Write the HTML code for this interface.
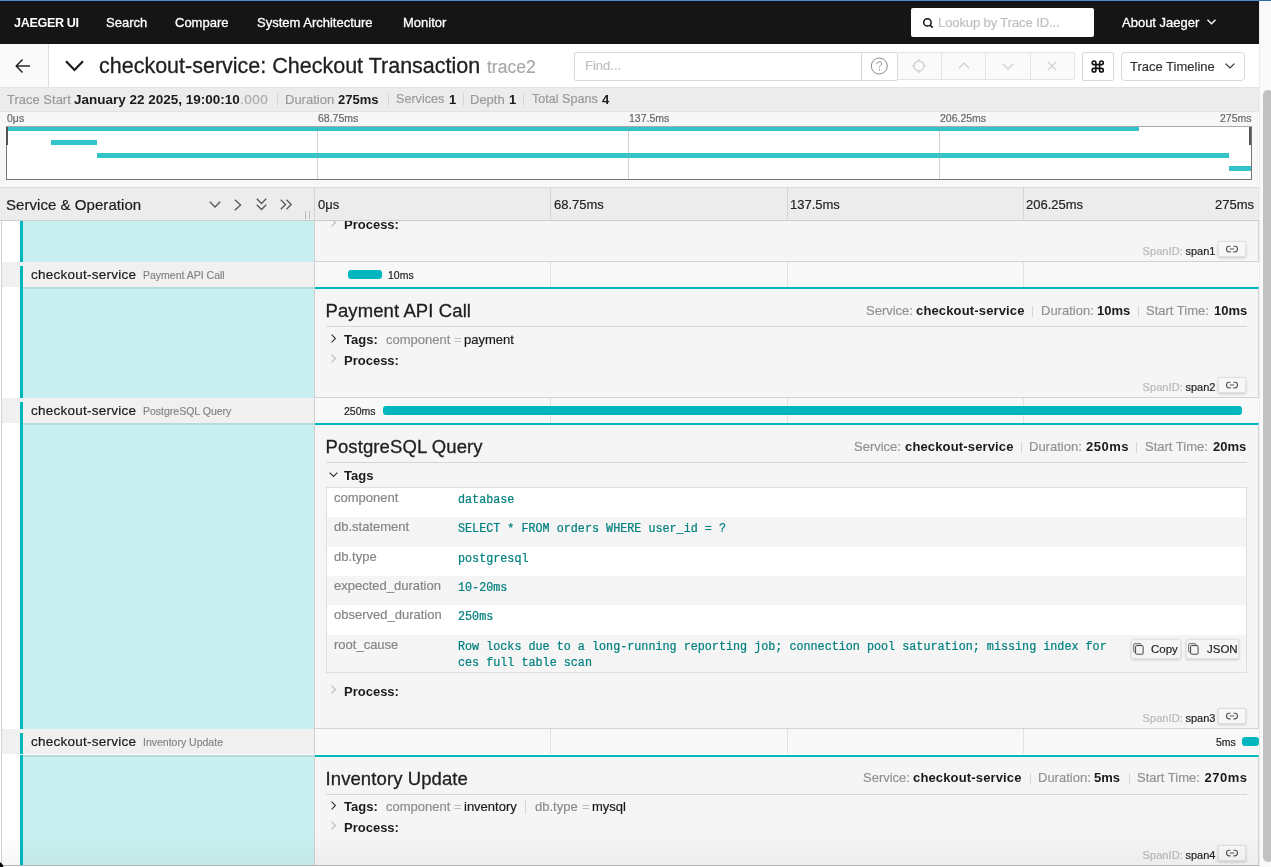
<!DOCTYPE html><html><head><meta charset="utf-8"><title>Jaeger UI</title><style>
*{box-sizing:border-box;margin:0;padding:0}
html,body{width:1271px;height:867px;overflow:hidden;background:#fff;font-family:"Liberation Sans",sans-serif;color:#222}
#root{position:absolute;left:0;top:0;width:1271px;height:867px;overflow:hidden;will-change:transform}
.a{position:absolute}
.t{position:absolute;white-space:pre;line-height:1}
svg{position:absolute;overflow:visible}
.vsep{position:absolute;width:1px;background:#d6d6d6}
.mono{font-family:"Liberation Mono",monospace;color:#00807f;-webkit-text-stroke:0.22px #00807f;transform:scaleY(1.1);transform-origin:0 11.1px}
</style></head><body><div id="root">
<div class="a" style="left:0;top:0;width:1259px;height:1px;background:#4a8dcc"></div><div class="a" style="left:1259px;top:0;width:12px;height:1px;background:#2e6aa6"></div>
<div class="a" style="left:0;top:1px;width:1259px;height:43px;background:#151515"></div>
<span class="t" style="left:14px;top:16.5px;font-size:12.6px;color:#fff;font-weight:700;letter-spacing:-0.35px">JAEGER UI</span>
<span class="t" style="left:106px;top:16px;font-size:13px;color:#fff;-webkit-text-stroke:0.3px #fff">Search</span>
<span class="t" style="left:175px;top:16px;font-size:13px;color:#fff;-webkit-text-stroke:0.3px #fff">Compare</span>
<span class="t" style="left:257px;top:16px;font-size:13px;color:#fff;-webkit-text-stroke:0.3px #fff">System Architecture</span>
<span class="t" style="left:403px;top:16px;font-size:13px;color:#fff;-webkit-text-stroke:0.3px #fff">Monitor</span>
<span class="t" style="left:1122px;top:16px;font-size:13px;color:#fff;-webkit-text-stroke:0.3px #fff">About Jaeger</span>
<div class="a" style="left:911px;top:8px;width:183px;height:29px;background:#fff;border-radius:2px"></div>
<svg style="left:923px;top:18px" width="11" height="11" viewBox="0 0 11 11"><circle cx="4.4" cy="4.4" r="3.7" fill="none" stroke="#151515" stroke-width="1.5"/><line x1="7.1" y1="7.1" x2="9.8" y2="9.8" stroke="#151515" stroke-width="1.6"/></svg>
<span class="t" style="left:938px;top:16px;font-size:13px;color:#bfbfbf;letter-spacing:-0.1px;-webkit-text-stroke:0.18px currentColor">Lookup by Trace ID...</span>
<svg style="left:1207px;top:19px" width="9" height="6" viewBox="0 0 9 6"><polyline points="0.5,0.8 4.5,4.8 8.5,0.8" fill="none" stroke="#fff" stroke-width="1.3"/></svg>
<div class="a" style="left:1259px;top:1px;width:12px;height:866px;background:#f9f9f9;border-left:1px solid #ebebeb"></div>
<div class="a" style="left:1263px;top:90px;width:10px;height:772px;background:#c1c1c1;border-radius:5px"></div>
<div class="a" style="left:0;top:44px;width:1259px;height:44px;background:#fff;border-bottom:1px solid #e3e3e3"></div>
<div class="a" style="left:0;top:44px;width:49px;height:43px;background:#fafafa;border-right:1px solid #dedede"></div>
<svg style="left:15px;top:59px" width="16" height="14" viewBox="0 0 16 14"><polyline points="7.5,0.6 1.2,7 7.5,13.4" fill="none" stroke="#1a1a1a" stroke-width="1.4"/><line x1="1.2" y1="7" x2="15" y2="7" stroke="#1a1a1a" stroke-width="1.4"/></svg>
<svg style="left:65px;top:60px" width="19" height="12" viewBox="0 0 19 12"><polyline points="1,1.2 9.5,10 18,1.2" fill="none" stroke="#1a1a1a" stroke-width="2.2"/></svg>
<span class="t" style="left:99px;top:56px;font-size:21.5px;color:#1f1f1f;-webkit-text-stroke:0.3px #1f1f1f">checkout-service: Checkout Transaction</span>
<span class="t" style="left:487px;top:59px;font-size:17.5px;color:#a8a8a8;-webkit-text-stroke:0.18px currentColor">trace2</span>
<div class="a" style="left:574px;top:52px;width:324px;height:29px;background:#fff;border:1px solid #d9d9d9;border-radius:2px"></div>
<div class="a" style="left:861px;top:52px;width:1px;height:29px;background:#d9d9d9"></div>
<span class="t" style="left:585px;top:59px;font-size:13px;color:#bfbfbf;-webkit-text-stroke:0.18px currentColor">Find...</span>
<svg style="left:870px;top:57px" width="18" height="18" viewBox="0 0 18 18"><circle cx="9.3" cy="9" r="8" fill="none" stroke="#8a8a8a" stroke-width="1"/><path d="M6.9,7.1 C6.9,5.5 8,4.8 9.3,4.8 C10.7,4.8 11.7,5.7 11.7,6.9 C11.7,8.5 9.4,8.6 9.4,10.5" fill="none" stroke="#888" stroke-width="1"/><circle cx="9.4" cy="12.8" r="0.7" fill="#888"/></svg>
<div class="a" style="left:898px;top:52px;width:177px;height:28px;background:#fafafa;border:1px solid #e4e4e4;border-left:none;border-radius:0 2px 2px 0"></div>
<div class="a" style="left:941px;top:52px;width:1px;height:28px;background:#e4e4e4"></div>
<div class="a" style="left:985px;top:52px;width:1px;height:28px;background:#e4e4e4"></div>
<div class="a" style="left:1030px;top:52px;width:1px;height:28px;background:#e4e4e4"></div>
<svg style="left:911px;top:58px" width="16" height="16" viewBox="0 0 16 16"><circle cx="8" cy="8" r="5" fill="none" stroke="#d2d2d2" stroke-width="1.3"/><line x1="8" y1="1" x2="8" y2="3.2" stroke="#d2d2d2" stroke-width="1.3"/><line x1="8" y1="12.8" x2="8" y2="15" stroke="#d2d2d2" stroke-width="1.3"/><line x1="1" y1="8" x2="3.2" y2="8" stroke="#d2d2d2" stroke-width="1.3"/><line x1="12.8" y1="8" x2="15" y2="8" stroke="#d2d2d2" stroke-width="1.3"/></svg>
<svg style="left:958px;top:62px" width="12" height="7" viewBox="0 0 12 7"><polyline points="0.8,6.2 6,1 11.2,6.2" fill="none" stroke="#d2d2d2" stroke-width="1.3"/></svg>
<svg style="left:1002px;top:63px" width="12" height="7" viewBox="0 0 12 7"><polyline points="0.8,0.8 6,6 11.2,0.8" fill="none" stroke="#d2d2d2" stroke-width="1.3"/></svg>
<svg style="left:1047px;top:61px" width="10" height="10" viewBox="0 0 10 10"><line x1="1" y1="1" x2="9" y2="9" stroke="#d2d2d2" stroke-width="1.3"/><line x1="9" y1="1" x2="1" y2="9" stroke="#d2d2d2" stroke-width="1.3"/></svg>
<div class="a" style="left:1082px;top:52px;width:32px;height:29px;background:#fff;border:1px solid #d9d9d9;border-radius:2px"></div>
<svg style="left:1091px;top:60px" width="13.5" height="13" viewBox="-1 -1 14 14"><path d="M4,4 H2 A2,2 0 1 1 4,2 V10 A2,2 0 1 1 2,8 H10 A2,2 0 1 1 8,10 V2 A2,2 0 1 1 10,4 H4" fill="none" stroke="#111" stroke-width="1.7"/></svg>
<div class="a" style="left:1121px;top:52px;width:124px;height:29px;background:#fff;border:1px solid #d9d9d9;border-radius:4px"></div>
<span class="t" style="left:1130px;top:60px;font-size:13px;color:#333;-webkit-text-stroke:0.18px currentColor">Trace Timeline</span>
<svg style="left:1225px;top:63px" width="10" height="6" viewBox="0 0 10 6"><polyline points="0.6,0.6 5,5 9.4,0.6" fill="none" stroke="#333" stroke-width="1.2"/></svg>
<div class="a" style="left:0;top:88px;width:1259px;height:23px;background:#ececec"></div>
<span class="t" style="left:7px;top:93px;font-size:13px;color:#9a9a9a;-webkit-text-stroke:0.18px currentColor">Trace Start</span>
<span class="t" style="left:74px;top:93px;font-size:13.5px;color:#1a1a1a;font-weight:700">January 22 2025, 19:00:10</span>
<span class="t" style="left:240px;top:93px;font-size:13.5px;color:#aaa;letter-spacing:0.5px;-webkit-text-stroke:0.18px currentColor">.000</span>
<div class="vsep" style="left:277px;top:93px;height:13px"></div>
<div class="vsep" style="left:388px;top:93px;height:13px"></div>
<div class="vsep" style="left:463px;top:93px;height:13px"></div>
<div class="vsep" style="left:523px;top:93px;height:13px"></div>
<span class="t" style="left:285px;top:93px;font-size:13px;color:#9a9a9a;-webkit-text-stroke:0.18px currentColor">Duration</span>
<span class="t" style="left:338px;top:93px;font-size:13px;color:#1a1a1a;font-weight:700">275ms</span>
<span class="t" style="left:396px;top:93.4px;font-size:12.6px;color:#9a9a9a;-webkit-text-stroke:0.18px currentColor">Services</span>
<span class="t" style="left:449px;top:93px;font-size:13px;color:#1a1a1a;font-weight:700">1</span>
<span class="t" style="left:470px;top:93px;font-size:13px;color:#9a9a9a;-webkit-text-stroke:0.18px currentColor">Depth</span>
<span class="t" style="left:509px;top:93px;font-size:13px;color:#1a1a1a;font-weight:700">1</span>
<span class="t" style="left:532px;top:93.4px;font-size:12.6px;color:#9a9a9a;-webkit-text-stroke:0.18px currentColor">Total Spans</span>
<span class="t" style="left:602px;top:93px;font-size:13px;color:#1a1a1a;font-weight:700">4</span>
<div class="a" style="left:0;top:111px;width:1259px;height:76px;background:#f7f7f7;border-top:1px solid #e2e2e2"></div>
<span class="t" style="left:7px;top:113px;font-size:10.5px;color:#666;-webkit-text-stroke:0.18px currentColor">0μs</span>
<span class="t" style="left:318px;top:113px;font-size:10.5px;color:#666;-webkit-text-stroke:0.18px currentColor">68.75ms</span>
<span class="t" style="left:629px;top:113px;font-size:10.5px;color:#666;-webkit-text-stroke:0.18px currentColor">137.5ms</span>
<span class="t" style="left:940px;top:113px;font-size:10.5px;color:#666;-webkit-text-stroke:0.18px currentColor">206.25ms</span>
<span class="t" style="left:1220px;top:113px;font-size:10.5px;color:#666;-webkit-text-stroke:0.18px currentColor">275ms</span>
<div class="a" style="left:6px;top:126px;width:1246px;height:54px;background:#fff;border:1px solid #777;border-top:1px solid #a9a9a9"></div>
<div class="a" style="left:7px;top:127px;width:1132px;height:4px;background:#33c4c9"></div>
<div class="a" style="left:51px;top:140px;width:46px;height:5px;background:#33c4c9"></div>
<div class="a" style="left:97px;top:153px;width:1132px;height:5px;background:#33c4c9"></div>
<div class="a" style="left:1229px;top:166px;width:22px;height:5px;background:#33c4c9"></div>
<div class="a" style="left:317px;top:127px;width:1px;height:52px;background:rgba(150,150,150,0.45)"></div>
<div class="a" style="left:628px;top:127px;width:1px;height:52px;background:rgba(150,150,150,0.45)"></div>
<div class="a" style="left:939px;top:127px;width:1px;height:52px;background:rgba(150,150,150,0.45)"></div>
<div class="a" style="left:6px;top:127px;width:2px;height:18px;background:#555"></div>
<div class="a" style="left:1249px;top:127px;width:2px;height:18px;background:#555"></div>
<div class="a" style="left:0;top:187px;width:1259px;height:34px;background:#ececec;border-top:1px solid #dcdcdc;border-bottom:1px solid #cdcdcd"></div>
<span class="t" style="left:6px;top:197px;font-size:15px;color:#1a1a1a;letter-spacing:0.05px;-webkit-text-stroke:0.18px currentColor">Service &amp; Operation</span>
<svg style="left:209px;top:201px" width="12" height="7" viewBox="0 0 12 7"><polyline points="0.8,0.8 6,6 11.2,0.8" fill="none" stroke="#555" stroke-width="1.3"/></svg>
<svg style="left:234px;top:199px" width="8" height="12" viewBox="0 0 8 12"><polyline points="0.8,0.8 6.6,6 0.8,11.2" fill="none" stroke="#555" stroke-width="1.3"/></svg>
<svg style="left:256px;top:198px" width="11" height="13" viewBox="0 0 11 13"><polyline points="0.8,0.8 5.5,5.5 10.2,0.8" fill="none" stroke="#555" stroke-width="1.3"/><polyline points="0.8,6.8 5.5,11.5 10.2,6.8" fill="none" stroke="#555" stroke-width="1.3"/></svg>
<svg style="left:280px;top:199px" width="12" height="11" viewBox="0 0 12 11"><polyline points="0.8,0.8 5.5,5.5 0.8,10.2" fill="none" stroke="#555" stroke-width="1.3"/><polyline points="6.5,0.8 11.2,5.5 6.5,10.2" fill="none" stroke="#555" stroke-width="1.3"/></svg>
<div class="a" style="left:305px;top:211px;width:1px;height:8px;background:#bbb"></div><div class="a" style="left:309px;top:211px;width:1px;height:8px;background:#bbb"></div>
<div class="a" style="left:314px;top:188px;width:1px;height:33px;background:#d4d4d4"></div>
<div class="a" style="left:550px;top:188px;width:1px;height:33px;background:#d4d4d4"></div>
<div class="a" style="left:787px;top:188px;width:1px;height:33px;background:#d4d4d4"></div>
<div class="a" style="left:1023px;top:188px;width:1px;height:33px;background:#d4d4d4"></div>
<span class="t" style="left:318px;top:198px;font-size:13px;color:#222;-webkit-text-stroke:0.18px currentColor">0μs</span>
<span class="t" style="left:554px;top:198px;font-size:13px;color:#222;-webkit-text-stroke:0.18px currentColor">68.75ms</span>
<span class="t" style="left:790px;top:198px;font-size:13px;color:#222;-webkit-text-stroke:0.18px currentColor">137.5ms</span>
<span class="t" style="left:1026px;top:198px;font-size:13px;color:#222;-webkit-text-stroke:0.18px currentColor">206.25ms</span>
<span class="t" style="left:1215px;top:198px;font-size:13px;color:#222;-webkit-text-stroke:0.18px currentColor">275ms</span>
<div class="a" style="left:0;top:221px;width:1259px;height:645px;overflow:hidden">
<div class="a" style="left:0;top:-221px;width:1259px;height:867px">
<div class="a" style="left:314px;top:100px;width:945px;height:162px;background:#f5f5f5;border:1px solid #d3d3d3;border-top:none"></div>
<div class="a" style="left:2px;top:100px;width:18px;height:162px;background:#fff"></div>
<div class="a" style="left:20px;top:100px;width:3px;height:162px;background:#00b7bd"></div>
<div class="a" style="left:23px;top:100px;width:291px;height:162px;background:#c9eff0"></div>
<svg style="left:330.8px;top:217.7px" width="5" height="9" viewBox="0 0 5 9"><polyline points="0.6,0.6 4.4,4.5 0.6,8.4" fill="none" stroke="#bbb" stroke-width="1.15"/></svg>
<span class="t" style="left:344px;top:218px;font-size:13px;color:#1a1a1a;font-weight:700">Process:</span>
<div class="a" style="left:1218px;top:241px;width:28px;height:16px;background:#f7f7f7;border:1px solid #e0e0e0;border-radius:1px;box-shadow:0 1px 3px rgba(0,0,0,0.18)"></div>
<svg style="left:1226px;top:245px" width="12" height="8" viewBox="0 0 12 8"><path d="M4.6,1.2 H3.3 A2.6,2.6 0 0 0 3.3,6.8 H4.6 M7.4,1.2 H8.7 A2.6,2.6 0 0 1 8.7,6.8 H7.4 M3.8,4 H8.2" fill="none" stroke="#555" stroke-width="1.15"/></svg>
<span class="t" style="left:1142.5px;top:246px;font-size:11px;color:#b8b8b8;letter-spacing:0.1px;-webkit-text-stroke:0.18px currentColor">SpanID:</span>
<span class="t" style="left:1185.5px;top:246px;font-size:11px;color:#222;-webkit-text-stroke:0.18px currentColor">span1</span>
<div class="a" style="left:2px;top:262px;width:312px;height:25px;background:#f0f0f0"></div>
<div class="a" style="left:20px;top:266px;width:3px;height:21px;background:#00b7bd"></div>
<div class="a" style="left:314px;top:262px;width:945px;height:25px;background:#f8f8f8"></div>
<div class="a" style="left:550px;top:262px;width:1px;height:25px;background:#e2e2e2"></div>
<div class="a" style="left:787px;top:262px;width:1px;height:25px;background:#e2e2e2"></div>
<div class="a" style="left:1023px;top:262px;width:1px;height:25px;background:#e2e2e2"></div>
<span class="t" style="left:31px;top:267.5px;font-size:13.5px;color:#1a1a1a;letter-spacing:0.25px;-webkit-text-stroke:0.2px #1a1a1a">checkout-service</span>
<span class="t" style="left:143px;top:270.3px;font-size:10.5px;color:#858585;-webkit-text-stroke:0.18px currentColor">Payment API Call</span>
<div class="a" style="left:348px;top:270px;width:34px;height:9px;background:#00b7bd;border-radius:3px"></div>
<span class="t" style="left:388px;top:270px;font-size:10.5px;color:#222;-webkit-text-stroke:0.18px currentColor">10ms</span>
<div class="a" style="left:314px;top:287px;width:945px;height:111px;background:#f5f5f5;border:1px solid #d3d3d3;border-top:2px solid #00b7bd"></div>
<div class="a" style="left:2px;top:287px;width:18px;height:111px;background:#fff"></div>
<div class="a" style="left:20px;top:287px;width:3px;height:111px;background:#00b7bd"></div>
<div class="a" style="left:23px;top:287px;width:291px;height:111px;background:#c9eff0"></div>
<div class="a" style="left:23px;top:287px;width:291px;height:2px;background:#b3dcdd"></div>
<span class="t" style="left:325.5px;top:301.5px;font-size:18.5px;color:#1f1f1f;letter-spacing:0.1px;-webkit-text-stroke:0.3px #1f1f1f">Payment API Call</span>
<div class="a" style="left:326px;top:326px;width:921px;height:1px;background:#d6d6d6"></div>
<span class="t" style="left:866px;top:304px;font-size:13px;color:#929292;-webkit-text-stroke:0.18px currentColor">Service:</span>
<span class="t" style="left:916px;top:304px;font-size:13px;color:#1a1a1a;font-weight:700;letter-spacing:0.15px">checkout-service</span>
<span class="t" style="left:1041px;top:304px;font-size:13px;color:#929292;-webkit-text-stroke:0.18px currentColor">Duration:</span>
<span class="t" style="left:1097px;top:304px;font-size:13px;color:#1a1a1a;font-weight:700">10ms</span>
<span class="t" style="left:1146px;top:304px;font-size:13px;color:#929292;-webkit-text-stroke:0.18px currentColor">Start Time:</span>
<span class="t" style="left:1214px;top:304px;font-size:13px;color:#1a1a1a;font-weight:700">10ms</span>
<div class="vsep" style="left:1032px;top:306px;height:11px"></div>
<div class="vsep" style="left:1138px;top:306px;height:11px"></div>
<svg style="left:330.8px;top:333.7px" width="5" height="9" viewBox="0 0 5 9"><polyline points="0.6,0.6 4.4,4.5 0.6,8.4" fill="none" stroke="#333" stroke-width="1.15"/></svg>
<span class="t" style="left:344px;top:333px;font-size:13px;color:#1a1a1a;font-weight:700">Tags:</span>
<span class="t" style="left:386px;top:333px;font-size:13px;color:#8c8c8c;-webkit-text-stroke:0.18px currentColor">component</span>
<span class="t" style="left:454px;top:333px;font-size:13px;color:#bbb;-webkit-text-stroke:0.18px currentColor">=</span>
<span class="t" style="left:464px;top:333px;font-size:13px;color:#1a1a1a;-webkit-text-stroke:0.18px currentColor">payment</span>
<svg style="left:330.8px;top:353.7px" width="5" height="9" viewBox="0 0 5 9"><polyline points="0.6,0.6 4.4,4.5 0.6,8.4" fill="none" stroke="#bbb" stroke-width="1.15"/></svg>
<span class="t" style="left:344px;top:354px;font-size:13px;color:#1a1a1a;font-weight:700">Process:</span>
<div class="a" style="left:1218px;top:377px;width:28px;height:16px;background:#f7f7f7;border:1px solid #e0e0e0;border-radius:1px;box-shadow:0 1px 3px rgba(0,0,0,0.18)"></div>
<svg style="left:1226px;top:381px" width="12" height="8" viewBox="0 0 12 8"><path d="M4.6,1.2 H3.3 A2.6,2.6 0 0 0 3.3,6.8 H4.6 M7.4,1.2 H8.7 A2.6,2.6 0 0 1 8.7,6.8 H7.4 M3.8,4 H8.2" fill="none" stroke="#555" stroke-width="1.15"/></svg>
<span class="t" style="left:1142.5px;top:382px;font-size:11px;color:#b8b8b8;letter-spacing:0.1px;-webkit-text-stroke:0.18px currentColor">SpanID:</span>
<span class="t" style="left:1185.5px;top:382px;font-size:11px;color:#222;-webkit-text-stroke:0.18px currentColor">span2</span>
<div class="a" style="left:2px;top:398px;width:312px;height:25px;background:#f0f0f0"></div>
<div class="a" style="left:20px;top:402px;width:3px;height:21px;background:#00b7bd"></div>
<div class="a" style="left:314px;top:398px;width:945px;height:25px;background:#f8f8f8"></div>
<div class="a" style="left:550px;top:398px;width:1px;height:25px;background:#e2e2e2"></div>
<div class="a" style="left:787px;top:398px;width:1px;height:25px;background:#e2e2e2"></div>
<div class="a" style="left:1023px;top:398px;width:1px;height:25px;background:#e2e2e2"></div>
<span class="t" style="left:31px;top:403.5px;font-size:13.5px;color:#1a1a1a;letter-spacing:0.25px;-webkit-text-stroke:0.2px #1a1a1a">checkout-service</span>
<span class="t" style="left:143px;top:406.3px;font-size:10.5px;color:#858585;-webkit-text-stroke:0.18px currentColor">PostgreSQL Query</span>
<div class="a" style="left:383px;top:406px;width:859px;height:9px;background:#00b7bd;border-radius:3px"></div>
<span class="t" style="left:344px;top:406px;font-size:10.5px;color:#222;-webkit-text-stroke:0.18px currentColor">250ms</span>
<div class="a" style="left:314px;top:423px;width:945px;height:306px;background:#f5f5f5;border:1px solid #d3d3d3;border-top:2px solid #00b7bd"></div>
<div class="a" style="left:2px;top:423px;width:18px;height:306px;background:#fff"></div>
<div class="a" style="left:20px;top:423px;width:3px;height:306px;background:#00b7bd"></div>
<div class="a" style="left:23px;top:423px;width:291px;height:306px;background:#c9eff0"></div>
<div class="a" style="left:23px;top:423px;width:291px;height:2px;background:#b3dcdd"></div>
<span class="t" style="left:325.5px;top:437.5px;font-size:18.5px;color:#1f1f1f;letter-spacing:0.1px;-webkit-text-stroke:0.3px #1f1f1f">PostgreSQL Query</span>
<div class="a" style="left:326px;top:462px;width:921px;height:1px;background:#d6d6d6"></div>
<span class="t" style="left:854px;top:440px;font-size:13px;color:#929292;-webkit-text-stroke:0.18px currentColor">Service:</span>
<span class="t" style="left:905px;top:440px;font-size:13px;color:#1a1a1a;font-weight:700;letter-spacing:0.15px">checkout-service</span>
<span class="t" style="left:1029px;top:440px;font-size:13px;color:#929292;-webkit-text-stroke:0.18px currentColor">Duration:</span>
<span class="t" style="left:1086px;top:440px;font-size:13px;color:#1a1a1a;font-weight:700;letter-spacing:0.5px">250ms</span>
<span class="t" style="left:1145px;top:440px;font-size:13px;color:#929292;-webkit-text-stroke:0.18px currentColor">Start Time:</span>
<span class="t" style="left:1213px;top:440px;font-size:13px;color:#1a1a1a;font-weight:700">20ms</span>
<div class="vsep" style="left:1021px;top:442px;height:11px"></div>
<div class="vsep" style="left:1136px;top:442px;height:11px"></div>
<svg style="left:329px;top:472px" width="9" height="6" viewBox="0 0 9 6"><polyline points="0.6,0.6 4.5,4.5 8.4,0.6" fill="none" stroke="#333" stroke-width="1.2"/></svg>
<span class="t" style="left:344px;top:469px;font-size:13px;color:#1a1a1a;font-weight:700">Tags</span>
<div class="a" style="left:326px;top:487px;width:921px;height:186px;background:#fff;border:1px solid #dedede"></div>
<div class="a" style="left:327px;top:488px;width:919px;height:29px;background:#fff"></div>
<span class="t" style="left:334px;top:491px;font-size:13px;color:#858585;-webkit-text-stroke:0.18px currentColor">component</span>
<span class="t mono" style="left:458px;top:492.0px;font-size:11.75px;line-height:16px">database</span>
<div class="a" style="left:327px;top:517px;width:919px;height:30px;background:#f5f5f5"></div>
<span class="t" style="left:334px;top:520px;font-size:13px;color:#858585;-webkit-text-stroke:0.18px currentColor">db.statement</span>
<span class="t mono" style="left:458px;top:521.0px;font-size:11.75px;line-height:16px">SELECT * FROM orders WHERE user_id = ?</span>
<div class="a" style="left:327px;top:547px;width:919px;height:29px;background:#fff"></div>
<span class="t" style="left:334px;top:550px;font-size:13px;color:#858585;-webkit-text-stroke:0.18px currentColor">db.type</span>
<span class="t mono" style="left:458px;top:551.0px;font-size:11.75px;line-height:16px">postgresql</span>
<div class="a" style="left:327px;top:576px;width:919px;height:29px;background:#f5f5f5"></div>
<span class="t" style="left:334px;top:579px;font-size:13px;color:#858585;-webkit-text-stroke:0.18px currentColor">expected_duration</span>
<span class="t mono" style="left:458px;top:580.0px;font-size:11.75px;line-height:16px">10-20ms</span>
<div class="a" style="left:327px;top:605px;width:919px;height:30px;background:#fff"></div>
<span class="t" style="left:334px;top:608px;font-size:13px;color:#858585;-webkit-text-stroke:0.18px currentColor">observed_duration</span>
<span class="t mono" style="left:458px;top:609.0px;font-size:11.75px;line-height:16px">250ms</span>
<div class="a" style="left:327px;top:635px;width:919px;height:37px;background:#f5f5f5"></div>
<span class="t" style="left:334px;top:638px;font-size:13px;color:#858585;-webkit-text-stroke:0.18px currentColor">root_cause</span>
<span class="t mono" style="left:458px;top:639.0px;font-size:11.75px;line-height:16px">Row locks due to a long-running reporting job; connection pool saturation; missing index for</span>
<span class="t mono" style="left:458px;top:654.8px;font-size:11.75px;line-height:16px">ces full table scan</span>
<div class="a" style="left:1131px;top:639px;width:50px;height:20px;background:#f5f5f5;border:1px solid #e3e3e3;border-radius:2px;box-shadow:0 1px 3px rgba(0,0,0,0.18)"></div>
<svg style="left:1133px;top:643px" width="11" height="12" viewBox="0 0 11 12"><rect x="0.6" y="0.6" width="7.5" height="8.5" rx="1" fill="#ddd" stroke="#777" stroke-width="1"/><rect x="2.6" y="2.6" width="7.5" height="8.6" rx="1" fill="#f5f5f5" stroke="#444" stroke-width="1"/></svg>
<span class="t" style="left:1151px;top:644px;font-size:11.5px;color:#222;-webkit-text-stroke:0.18px currentColor">Copy</span>
<div class="a" style="left:1186px;top:639px;width:53px;height:20px;background:#f5f5f5;border:1px solid #e3e3e3;border-radius:2px;box-shadow:0 1px 3px rgba(0,0,0,0.18)"></div>
<svg style="left:1188px;top:643px" width="11" height="12" viewBox="0 0 11 12"><rect x="0.6" y="0.6" width="7.5" height="8.5" rx="1" fill="#ddd" stroke="#777" stroke-width="1"/><rect x="2.6" y="2.6" width="7.5" height="8.6" rx="1" fill="#f5f5f5" stroke="#444" stroke-width="1"/></svg>
<span class="t" style="left:1207px;top:644px;font-size:11.5px;color:#222;-webkit-text-stroke:0.18px currentColor">JSON</span>
<svg style="left:330.8px;top:684.7px" width="5" height="9" viewBox="0 0 5 9"><polyline points="0.6,0.6 4.4,4.5 0.6,8.4" fill="none" stroke="#bbb" stroke-width="1.15"/></svg>
<span class="t" style="left:344px;top:685px;font-size:13px;color:#1a1a1a;font-weight:700">Process:</span>
<div class="a" style="left:1218px;top:708px;width:28px;height:16px;background:#f7f7f7;border:1px solid #e0e0e0;border-radius:1px;box-shadow:0 1px 3px rgba(0,0,0,0.18)"></div>
<svg style="left:1226px;top:712px" width="12" height="8" viewBox="0 0 12 8"><path d="M4.6,1.2 H3.3 A2.6,2.6 0 0 0 3.3,6.8 H4.6 M7.4,1.2 H8.7 A2.6,2.6 0 0 1 8.7,6.8 H7.4 M3.8,4 H8.2" fill="none" stroke="#555" stroke-width="1.15"/></svg>
<span class="t" style="left:1142.5px;top:713px;font-size:11px;color:#b8b8b8;letter-spacing:0.1px;-webkit-text-stroke:0.18px currentColor">SpanID:</span>
<span class="t" style="left:1185.5px;top:713px;font-size:11px;color:#222;-webkit-text-stroke:0.18px currentColor">span3</span>
<div class="a" style="left:2px;top:729px;width:312px;height:25px;background:#f0f0f0"></div>
<div class="a" style="left:20px;top:733px;width:3px;height:21px;background:#00b7bd"></div>
<div class="a" style="left:314px;top:729px;width:945px;height:25px;background:#f8f8f8"></div>
<div class="a" style="left:550px;top:729px;width:1px;height:25px;background:#e2e2e2"></div>
<div class="a" style="left:787px;top:729px;width:1px;height:25px;background:#e2e2e2"></div>
<div class="a" style="left:1023px;top:729px;width:1px;height:25px;background:#e2e2e2"></div>
<span class="t" style="left:31px;top:734.5px;font-size:13.5px;color:#1a1a1a;letter-spacing:0.25px;-webkit-text-stroke:0.2px #1a1a1a">checkout-service</span>
<span class="t" style="left:143px;top:737.3px;font-size:10.5px;color:#858585;-webkit-text-stroke:0.18px currentColor">Inventory Update</span>
<div class="a" style="left:1242px;top:737px;width:17px;height:9px;background:#00b7bd;border-radius:3px"></div>
<span class="t" style="left:1216px;top:737px;font-size:10.5px;color:#222;-webkit-text-stroke:0.18px currentColor">5ms</span>
<div class="a" style="left:314px;top:755px;width:945px;height:112px;background:#f5f5f5;border:1px solid #d3d3d3;border-top:2px solid #00b7bd"></div>
<div class="a" style="left:2px;top:755px;width:18px;height:112px;background:#fff"></div>
<div class="a" style="left:20px;top:755px;width:3px;height:112px;background:#00b7bd"></div>
<div class="a" style="left:23px;top:755px;width:291px;height:112px;background:#c9eff0"></div>
<div class="a" style="left:23px;top:755px;width:291px;height:2px;background:#b3dcdd"></div>
<span class="t" style="left:325.5px;top:769.5px;font-size:18.5px;color:#1f1f1f;letter-spacing:0.1px;-webkit-text-stroke:0.3px #1f1f1f">Inventory Update</span>
<div class="a" style="left:326px;top:794px;width:921px;height:1px;background:#d6d6d6"></div>
<span class="t" style="left:863px;top:771px;font-size:13px;color:#929292;-webkit-text-stroke:0.18px currentColor">Service:</span>
<span class="t" style="left:913px;top:771px;font-size:13px;color:#1a1a1a;font-weight:700;letter-spacing:0.15px">checkout-service</span>
<span class="t" style="left:1038px;top:771px;font-size:13px;color:#929292;-webkit-text-stroke:0.18px currentColor">Duration:</span>
<span class="t" style="left:1094px;top:771px;font-size:13px;color:#1a1a1a;font-weight:700">5ms</span>
<span class="t" style="left:1137px;top:771px;font-size:13px;color:#929292;-webkit-text-stroke:0.18px currentColor">Start Time:</span>
<span class="t" style="left:1204.5px;top:771px;font-size:13px;color:#1a1a1a;font-weight:700;letter-spacing:0.5px">270ms</span>
<div class="vsep" style="left:1030px;top:773px;height:11px"></div>
<div class="vsep" style="left:1129px;top:773px;height:11px"></div>
<svg style="left:330.8px;top:800.7px" width="5" height="9" viewBox="0 0 5 9"><polyline points="0.6,0.6 4.4,4.5 0.6,8.4" fill="none" stroke="#333" stroke-width="1.15"/></svg>
<span class="t" style="left:344px;top:800px;font-size:13px;color:#1a1a1a;font-weight:700">Tags:</span>
<span class="t" style="left:386px;top:800px;font-size:13px;color:#8c8c8c;-webkit-text-stroke:0.18px currentColor">component</span>
<span class="t" style="left:454px;top:800px;font-size:13px;color:#bbb;-webkit-text-stroke:0.18px currentColor">=</span>
<span class="t" style="left:464px;top:800px;font-size:13px;color:#1a1a1a;-webkit-text-stroke:0.18px currentColor">inventory</span>
<div class="vsep" style="left:525px;top:800px;height:14px"></div>
<span class="t" style="left:535px;top:800px;font-size:13px;color:#8c8c8c;-webkit-text-stroke:0.18px currentColor">db.type</span>
<span class="t" style="left:582px;top:800px;font-size:13px;color:#bbb;-webkit-text-stroke:0.18px currentColor">=</span>
<span class="t" style="left:592px;top:800px;font-size:13px;color:#1a1a1a;-webkit-text-stroke:0.18px currentColor">mysql</span>
<svg style="left:330.8px;top:820.7px" width="5" height="9" viewBox="0 0 5 9"><polyline points="0.6,0.6 4.4,4.5 0.6,8.4" fill="none" stroke="#bbb" stroke-width="1.15"/></svg>
<span class="t" style="left:344px;top:821px;font-size:13px;color:#1a1a1a;font-weight:700">Process:</span>
<div class="a" style="left:1218px;top:845px;width:28px;height:16px;background:#f7f7f7;border:1px solid #e0e0e0;border-radius:1px;box-shadow:0 1px 3px rgba(0,0,0,0.18)"></div>
<svg style="left:1226px;top:849px" width="12" height="8" viewBox="0 0 12 8"><path d="M4.6,1.2 H3.3 A2.6,2.6 0 0 0 3.3,6.8 H4.6 M7.4,1.2 H8.7 A2.6,2.6 0 0 1 8.7,6.8 H7.4 M3.8,4 H8.2" fill="none" stroke="#555" stroke-width="1.15"/></svg>
<span class="t" style="left:1142.5px;top:850px;font-size:11px;color:#b8b8b8;letter-spacing:0.1px;-webkit-text-stroke:0.18px currentColor">SpanID:</span>
<span class="t" style="left:1185.5px;top:850px;font-size:11px;color:#222;-webkit-text-stroke:0.18px currentColor">span4</span>
<div class="a" style="left:314px;top:221px;width:1px;height:645px;background:#d0d0d0"></div>
</div></div>
<div class="a" style="left:2px;top:835px;width:1257px;height:30px;background:linear-gradient(to bottom,rgba(0,0,0,0),rgba(0,0,0,0.03))"></div>
<div class="a" style="left:1px;top:221px;width:1px;height:645px;background:#d2d2d2"></div>
<div class="a" style="left:1px;top:865px;width:1258px;height:1px;background:#b8b8b8"></div>
<svg style="left:0;top:862px" width="4" height="5" viewBox="0 0 4 5"><polygon points="0,0.5 0.8,0.5 3.2,3.5 3.2,5 0,5" fill="#000"/></svg>
</div></body></html>
